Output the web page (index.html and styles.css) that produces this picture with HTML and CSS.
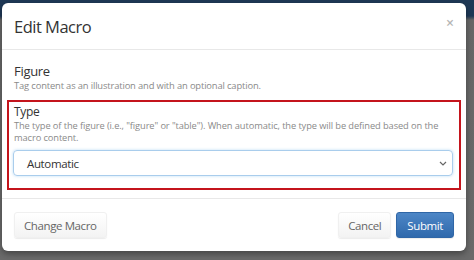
FILE: index.html
```html
<!DOCTYPE html>
<html>
<head>
<meta charset="utf-8">
<link rel="stylesheet" href="styles.css">
</head>
<body>
<div class="backdrop">
  <div class="modal">
    <div class="modal-header">
      <h1 class="title">Edit Macro</h1>
      <span class="close">×</span>
    </div>
    <div class="modal-body">
      <h2 class="macro-name">Figure</h2>
      <p class="macro-desc">Tag content as an illustration and with an optional caption.</p>
      <div class="field highlight">
        <label class="field-label">Type</label>
        <p class="field-help">The type of the figure (i.e., "figure" or "table"). When automatic, the type will be defined based on the macro content.</p>
        <div class="select">
          <span>Automatic</span>
          <svg class="chev" width="8" height="5" viewBox="0 0 8 5"><path d="M1 1 L4 4 L7 1" fill="none" stroke="#666" stroke-width="1.2"/></svg>
        </div>
      </div>
    </div>
    <div class="modal-footer">
      <button class="btn">Change Macro</button>
      <div class="right">
        <button class="btn">Cancel</button>
        <button class="btn primary">Submit</button>
      </div>
    </div>
  </div>
</div>
</body>
</html>
```
FILE: styles.css
```css
html, body { margin: 0; padding: 0; }
body {
  width: 474px; height: 260px; overflow: hidden;
  background: linear-gradient(#1e3856 0, #1e3856 16px, #676767 20px, #6a6a6a 100%);
  font-family: "Open Sans", "Noto Sans", sans-serif;
}
.backdrop { padding: 3px 8px 0 2px; }
.modal {
  background: #fff;
  border-radius: 6px;
  height: 248px;
  box-shadow: 0 3px 6px rgba(0,0,0,0.35);
  display: flex; flex-direction: column;
}
.modal-header {
  height: 46px;
  border-bottom: 1px solid #e8e8e8;
  display: flex; align-items: center; justify-content: space-between;
  padding: 0 12px 0 12px;
}
.title { margin: 0; font-size: 16.5px; letter-spacing: -0.5px; font-weight: 400; color: #333; }
.close { color: #b5b5b5; font-size: 14px; margin-top: -7px; font-weight: 600; }
.modal-body { padding: 13px 5px 0 5px; }
.macro-name { margin: 0 0 0 7px; font-size: 13px; letter-spacing: -0.3px; font-weight: 400; color: #333; line-height: 16px; }
.macro-desc { margin: 1px 0 0 7px; font-size: 9.4px; letter-spacing: -0.15px; color: #8a8a8a; line-height: 12px; }
.field {
  margin-top: 8px;
  border: 2px solid #c4141c;
  padding: 2px 6px 12px 4px;
}
.field-label { display: block; font-size: 12px; letter-spacing: -0.3px; color: #333; line-height: 16px; padding-left: 1px; }
.field-help { margin: 0; padding-left: 1px; font-size: 9.3px; letter-spacing: -0.1px; color: #8a8a8a; line-height: 12px; }
.select {
  box-sizing: border-box;
  margin-top: 6px;
  height: 26px;
  border: 1px solid #a9cdec;
  border-radius: 4px;
  box-shadow: 0 0 3px rgba(102,175,233,0.45);
  display: flex; align-items: center; justify-content: space-between;
  padding: 0 5px 0 13px;
  font-size: 11.5px; letter-spacing: -0.35px; color: #333;
}
.chev { display: block; }
.modal-footer {
  margin-top: 8px;
  border-top: 1px solid #e8e8e8;
  height: 52px;
  display: flex; align-items: center; justify-content: space-between;
  padding: 0 12px 0 12px;
}
.right { display: flex; gap: 5px; }
.btn {
  font-family: "Open Sans", "Noto Sans", sans-serif;
  font-size: 11.5px; letter-spacing: -0.4px; color: #666;
  height: 26px; padding: 0 9px;
  border: 1px solid #f0f0f0;
  border-radius: 3px;
  background: linear-gradient(#ffffff, #f3f3f3);
  box-shadow: 0 1px 1px rgba(0,0,0,0.08);
}
.btn.primary {
  color: #fff;
  background: linear-gradient(#4d86c6, #2f69ac);
  border-color: #2f66a6;
  padding: 0 10px;
}
```
